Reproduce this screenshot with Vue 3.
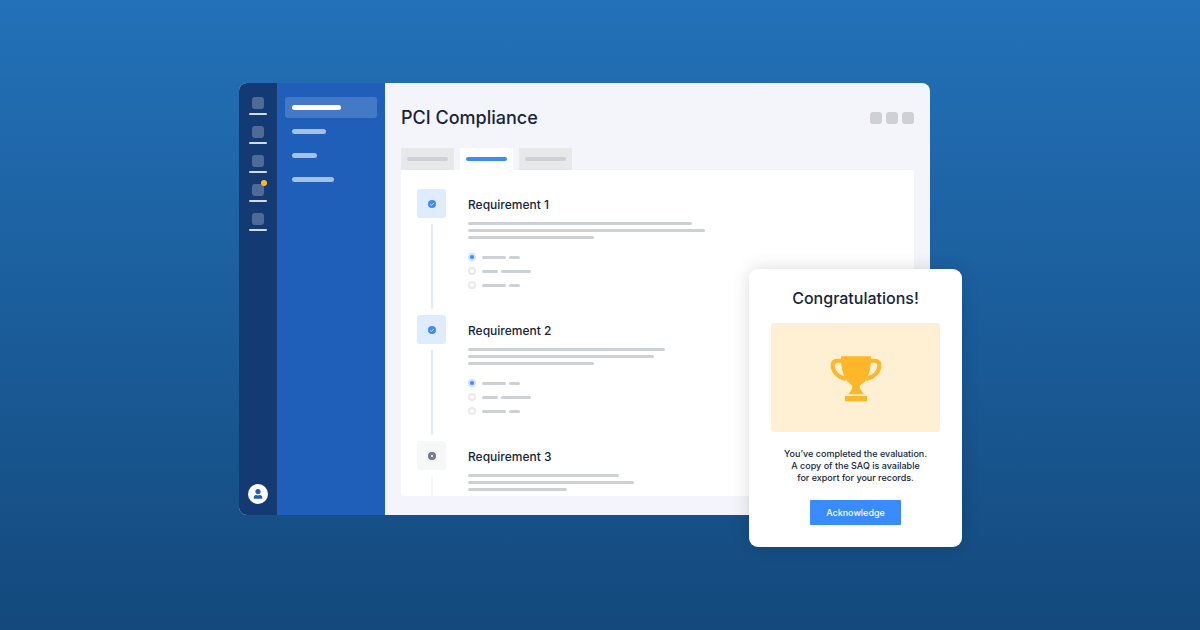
<script setup>
import { ref } from 'vue'

const railItems = [
  { name: 'Home', badge: false },
  { name: 'Scans', badge: false },
  { name: 'Reports', badge: false },
  { name: 'Compliance', badge: true },
  { name: 'Settings', badge: false },
]

const menu = [
  { name: 'Overview', width: 49 },
  { name: 'Scope', width: 34 },
  { name: 'Team', width: 25 },
  { name: 'Documents', width: 42 },
]

const tabs = ['Summary', 'Requirements', 'History']
const activeTab = ref(1)

const optionBars = [[24, 11], [16, 30], [24, 11]]

const steps = [
  { title: 'Requirement 1', done: true, lines: [224, 237, 126], options: optionBars },
  { title: 'Requirement 2', done: true, lines: [197, 186, 126], options: optionBars },
  { title: 'Requirement 3', done: false, lines: [151, 166, 99], options: [] },
]
const answers = ref([0, 0, 0])
</script>

<template>
  <div class="stage">
    <div class="window">
      <nav class="rail" aria-label="Primary">
        <a v-for="item in railItems" :key="item.name" href="#" class="rail-item" :aria-label="item.name">
          <span class="rail-icon"><span v-if="item.badge" class="badge"></span></span>
          <span class="rail-line"></span>
        </a>
        <button class="avatar" type="button" aria-label="Account">
          <svg viewBox="0 0 20 20" width="20" height="20">
            <circle cx="10" cy="7.6" r="2.6" />
            <path d="M5.800 14.800v-1.300c0-1.500 1.100-2.500 2.500-2.500.6.3 1.100.4 1.700.4s1.100-.1 1.700-.4c1.400 0 2.500 1 2.500 2.500v1.300z" />
          </svg>
        </button>
      </nav>

      <nav class="menu" aria-label="Secondary">
        <a v-for="(item, i) in menu" :key="item.name" href="#" class="menu-item" :class="{ active: i === 0 }" :aria-label="item.name">
          <span class="menu-bar" :style="{ width: item.width + 'px' }"></span>
        </a>
      </nav>

      <main class="main">
        <header class="header">
          <h1>PCI Compliance</h1>
          <div class="actions">
            <button v-for="n in 3" :key="n" type="button" :aria-label="'Action ' + n"></button>
          </div>
        </header>

        <div class="tabs" role="tablist">
          <button
            v-for="(tab, i) in tabs"
            :key="tab"
            type="button"
            role="tab"
            class="tab"
            :class="{ active: i === activeTab }"
            :aria-selected="i === activeTab"
            :aria-label="tab"
            @click="activeTab = i"
          >
            <span></span>
          </button>
        </div>

        <section class="card">
          <article v-for="(step, s) in steps" :key="step.title" class="step" :class="{ done: step.done }">
            <div class="track">
              <div class="status">
                <svg viewBox="0 0 8 8" width="8" height="8">
                  <circle cx="4" cy="4" r="4" />
                  <path v-if="step.done" d="M2.300 4.200 3.500 5.300 5.800 2.900" />
                  <path v-else d="M2.700 2.700 5.300 5.300M5.300 2.700 2.700 5.300" />
                </svg>
              </div>
              <div class="connector"></div>
            </div>
            <div class="body">
              <h2>{{ step.title }}</h2>
              <div class="lines">
                <span v-for="(w, i) in step.lines" :key="i" :style="{ width: w + 'px' }"></span>
              </div>
              <div v-if="step.options.length" class="options">
                <label v-for="(bars, i) in step.options" :key="i" class="option">
                  <input v-model="answers[s]" type="radio" :name="'answer-' + s" :value="i" :aria-label="'Option ' + (i + 1)" />
                  <span v-for="(w, b) in bars" :key="b" :style="{ width: w + 'px' }"></span>
                </label>
              </div>
            </div>
          </article>
        </section>
      </main>

      <div class="dialog" role="dialog" aria-labelledby="dialog-title">
        <h2 id="dialog-title">Congratulations!</h2>
        <div class="prize">
          <svg viewBox="267 296 156 144" width="52" height="48">
            <path class="handle" d="M303 316H289C278 316 275 323 275 331C275 350 292 366 315 371M387 316H401C412 316 415 323 415 331C415 350 398 366 375 371" />
            <path d="M300 303H390C390 338 384 361 373 376C368 382 360 387 356 391C356 401 362 409 370 417H321C329 409 334 401 334 391C330 387 323 382 318 376C306 361 300 338 300 303Z" />
            <path d="M312 422H378V438H312Z" />
          </svg>
        </div>
        <p>You’ve completed the evaluation.<br />A copy of the SAQ is available<br />for export for your records.</p>
        <button type="button" class="ack">Acknowledge</button>
      </div>
    </div>
  </div>
</template>

<style>
body {
  margin: 0;
}
</style>

<style scoped>
* {
  box-sizing: border-box;
}

h1,
h2,
p {
  margin: 0;
}

button {
  border: 0;
  padding: 0;
  font-family: inherit;
  cursor: pointer;
}

.stage {
  min-height: 100vh;
  padding: 83px 270px 115px 239px;
  background: linear-gradient(#2371b9, #13497c);
  font-family: Inter, "Liberation Sans", sans-serif;
  color: #14253d;
}

.window {
  position: relative;
  display: flex;
  border-radius: 8px;
  background: #f4f5fa;
}

.rail {
  display: flex;
  flex: 0 0 38px;
  flex-direction: column;
  align-items: center;
  gap: 11px;
  padding: 14px 0 11px;
  border-radius: 8px 0 0 8px;
  background: #133a73;
}

.rail-item {
  display: flex;
  flex-direction: column;
  align-items: center;
  gap: 4px;
}

.rail-icon {
  position: relative;
  width: 12px;
  height: 12px;
  border-radius: 3px;
  background: #4e6b97;
}

.badge {
  position: absolute;
  top: -4px;
  right: -3px;
  width: 6px;
  height: 6px;
  border-radius: 50%;
  background: #ffb628;
}

.rail-line {
  width: 18px;
  height: 2px;
  border-radius: 1px;
  background: #d5dce6;
}

.avatar {
  display: flex;
  margin-top: auto;
  border-radius: 50%;
  background: #fff;
}

.avatar svg {
  fill: #1f5eb9;
}

.menu {
  display: flex;
  flex: 0 0 108px;
  flex-direction: column;
  gap: 3px;
  padding: 14px 8px;
  background: #1f5eb9;
}

.menu-item {
  display: flex;
  align-items: center;
  height: 21px;
  padding-left: 7px;
  border-radius: 3px;
}

.menu-item.active {
  background: #4479c5;
}

.menu-bar {
  height: 5px;
  border-radius: 3px;
  background: #a6c0e4;
}

.active .menu-bar {
  background: #fff;
}

.main {
  flex: 1;
  min-width: 0;
  padding: 23px 16px 19px;
}

.header {
  display: flex;
  align-items: center;
  justify-content: space-between;
  margin-bottom: 18px;
}

h1 {
  font-size: 18px;
  font-weight: 500;
  line-height: 24px;
}

.actions {
  display: flex;
  gap: 4px;
}

.actions button {
  width: 12px;
  height: 12px;
  border-radius: 3px;
  background: #cdd1d5;
}

.tabs {
  display: flex;
  gap: 6px;
}

.tab {
  display: flex;
  align-items: center;
  justify-content: center;
  width: 53px;
  height: 22px;
  border-radius: 1px 1px 0 0;
  background: #e6e8ea;
}

.tab span {
  width: 41px;
  height: 4px;
  border-radius: 2px;
  background: #cdd1d5;
}

.tab.active {
  background: #fff;
}

.tab.active span {
  background: #3a8bff;
}

.card {
  padding: 19px 16px 0;
  border-radius: 0 3px 3px 3px;
  background: #fff;
}

.step {
  display: flex;
  gap: 22px;
}

.track {
  display: flex;
  flex: 0 0 29px;
  flex-direction: column;
  align-items: center;
}

.status {
  display: flex;
  align-items: center;
  justify-content: center;
  width: 29px;
  height: 29px;
  border-radius: 3px;
  background: #f6f7f7;
}

.status circle {
  fill: #6f7883;
}

.status path {
  fill: none;
  stroke: #fff;
  stroke-width: 0.8;
}

.done .status {
  background: #dfebff;
}

.done .status circle {
  fill: #3a8bff;
}

.connector {
  flex: 1;
  width: 2px;
  margin-top: 6px;
  background: #f6f7f7;
}

.done .connector {
  margin-bottom: 6px;
  border-radius: 1px;
  background: #dfebff;
}

.body {
  flex: 1;
  padding: 8px 0 5px;
}

.done .body {
  padding-bottom: 26px;
}

.body h2 {
  font-size: 12px;
  font-weight: 550;
  line-height: 16px;
}

.lines {
  display: flex;
  flex-direction: column;
  gap: 4px;
  margin-top: 9px;
}

.lines span,
.option span {
  height: 3px;
  border-radius: 2px;
  background: #cdd1d5;
}

.options {
  display: flex;
  flex-direction: column;
  align-items: flex-start;
  gap: 6px;
  margin-top: 14px;
}

.option {
  display: flex;
  align-items: center;
  gap: 3px;
  height: 8px;
}

.option input {
  appearance: none;
  width: 8px;
  height: 8px;
  margin: 0 3px 0 0;
  border: 2px solid #e6e8ea;
  border-radius: 50%;
  background: #fff;
}

.option input:checked {
  border-color: #cde0ff;
  background: #3a8bff;
}

.dialog {
  position: absolute;
  right: -32px;
  bottom: -32px;
  display: flex;
  flex-direction: column;
  align-items: center;
  width: 213px;
  padding: 19px 22px 22px;
  border-radius: 9px;
  background: #fff;
  box-shadow: 0 0 18px rgba(0, 0, 0, 0.14);
  text-align: center;
}

.dialog h2 {
  font-size: 16px;
  font-weight: 550;
  line-height: 20px;
}

.prize {
  display: flex;
  align-items: center;
  align-self: stretch;
  justify-content: center;
  height: 109px;
  margin: 15px 0 16px;
  border-radius: 3px;
  background: #fff0d4;
}

.prize svg {
  fill: #ffb628;
}

.prize .handle {
  fill: none;
  stroke: #ffb628;
  stroke-width: 12;
}

.dialog p {
  font-size: 9px;
  font-weight: 550;
  line-height: 12px;
  white-space: nowrap;
}

.ack {
  width: 91px;
  height: 25px;
  margin-top: 16px;
  border-radius: 1px;
  background: #3a8bff;
  color: #fff;
  font-size: 9px;
  font-weight: 550;
}
</style>
